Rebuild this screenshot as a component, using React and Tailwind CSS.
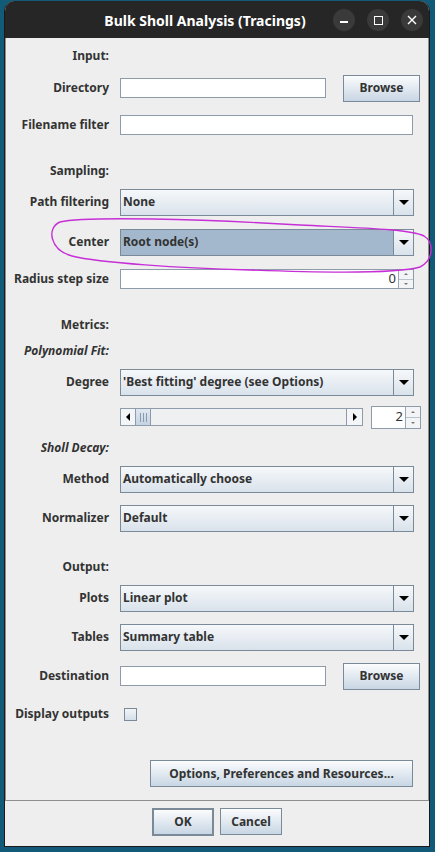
const font = { fontFamily: '"Noto Sans", "Open Sans", sans-serif' };

function Label({ children, italic }) {
  return (
    <div className={`w-[103px] shrink-0 text-right text-[12px] font-bold text-[#333333] ${italic ? 'italic' : ''}`}>
      {children}
    </div>
  );
}

function Row({ label, italic, h = 'h-[30px]', mt, children }) {
  return (
    <div className={`flex ${h} items-center gap-[11px] ${mt}`}>
      <Label italic={italic}>{label}</Label>
      <div className="flex flex-1 items-center">{children}</div>
    </div>
  );
}

function TextField({ w = 'w-[206px]' }) {
  return <div className={`h-[20px] ${w} border border-[#8d9bab] bg-white`} />;
}

function Arrow({ dir = 'down' }) {
  if (dir === 'down') return <div className="h-0 w-0 border-x-[5px] border-t-[5px] border-x-transparent border-t-black" />;
  if (dir === 'left') return <div className="h-0 w-0 border-y-[4px] border-r-[4px] border-y-transparent border-r-black" />;
  return <div className="h-0 w-0 border-y-[4px] border-l-[4px] border-y-transparent border-l-black" />;
}

function Combo({ value, selected }) {
  return (
    <div className="flex h-[27px] w-[294px] border border-[#7a8a99] bg-linear-to-b from-[#f6f8fa] to-[#d9e2eb]">
      <div className={`flex flex-1 items-center px-[2px] text-[12px] font-bold text-[#333333] ${selected ? 'bg-[#a3b8cc]' : ''}`}>
        {value}
      </div>
      <div className="flex w-[20px] items-center justify-center border-l border-[#7a8a99]">
        <Arrow />
      </div>
    </div>
  );
}

function Spinner({ value, w, h }) {
  return (
    <div className={`flex ${w} ${h} border border-[#8d9bab] bg-white`}>
      <div className="flex flex-1 items-center justify-end pr-[2px] text-[13px] text-[#333333]">{value}</div>
      <div className="flex w-[15px] flex-col border-l border-[#9aa8b6] bg-[#f2f4f6]">
        <div className="flex flex-1 items-center justify-center border-b border-[#b8c3ce]">
          <div className="h-0 w-0 border-x-[2px] border-b-[2px] border-x-transparent border-b-[#777]" />
        </div>
        <div className="flex flex-1 items-center justify-center">
          <div className="h-0 w-0 border-x-[2px] border-t-[2px] border-x-transparent border-t-[#777]" />
        </div>
      </div>
    </div>
  );
}

function Button({ children, w, className = '' }) {
  return (
    <div
      className={`flex h-[27px] ${w} items-center justify-center border border-[#7a8a99] bg-linear-to-b from-[#fbfcfd] to-[#c8d6e4] text-[12px] font-bold text-[#333333] ${className}`}
    >
      {children}
    </div>
  );
}

function Scrollbar() {
  return (
    <div className="flex h-[18px] w-[243px] border border-[#8d9bab] bg-[#eef0f2]">
      <div className="flex w-[15px] items-center justify-center border-r border-[#8d9bab] bg-[#f4f5f6]">
        <Arrow dir="left" />
      </div>
      <div className="flex w-[15px] items-center justify-center gap-[2px] border-r border-[#8d9bab] bg-linear-to-b from-[#dfe8f1] to-[#c4d3e2]">
        <div className="h-[9px] w-px bg-[#8a9aab]" />
        <div className="h-[9px] w-px bg-[#8a9aab]" />
        <div className="h-[9px] w-px bg-[#8a9aab]" />
      </div>
      <div className="flex-1" />
      <div className="flex w-[16px] items-center justify-center border-l border-[#8d9bab] bg-[#f4f5f6]">
        <Arrow dir="right" />
      </div>
    </div>
  );
}

function TitleButton({ children }) {
  return <div className="flex h-[22px] w-[22px] items-center justify-center rounded-full bg-[#3a3a3a]">{children}</div>;
}

export default function App() {
  return (
    <div className="relative h-[852px] w-[435px] overflow-hidden bg-[#115a78] pt-[1px] pl-[4px]" style={font}>
      <div className="flex h-[846px] w-[426px] flex-col overflow-hidden rounded-t-[10px] border-x border-b border-[#1a1a1a] bg-[#eeeeee]">
        {/* title bar */}
        <div className="relative flex h-[37px] shrink-0 items-center justify-center bg-[#262626]">
          <div className="-ml-[24px] mt-[1px] text-[14px] font-bold text-white">Bulk Sholl Analysis (Tracings)</div>
          <div className="absolute right-[6px] top-[8px] flex gap-[12px]">
            <TitleButton>
              <div className="mt-[4px] h-[1.5px] w-[8px] bg-white" />
            </TitleButton>
            <TitleButton>
              <div className="h-[9px] w-[9px] border-[1.5px] border-white" />
            </TitleButton>
            <TitleButton>
              <svg width="10" height="10" viewBox="0 0 10 10">
                <path d="M1 1L9 9M9 1L1 9" stroke="white" strokeWidth="1.4" />
              </svg>
            </TitleButton>
          </div>
        </div>

        {/* form panel */}
        <div className="flex flex-col border-x border-b border-[#8e8e8e] pr-[8px] pt-[8px] pb-[13px]">
          <Row label="Input:" h="h-[20px]" />
          <Row label="Directory" mt="mt-[7px]">
            <TextField />
            <Button w="w-[77px]" className="ml-auto">Browse</Button>
          </Row>
          <Row label="Filename filter" mt="mt-[7px]">
            <TextField w="w-[293px]" />
          </Row>
          <Row label="Sampling:" h="h-[20px]" mt="mt-[21px]" />
          <Row label="Path filtering" mt="mt-[6px]">
            <Combo value="None" />
          </Row>
          <Row label="Center" mt="mt-[10px]">
            <Combo value="Root node(s)" selected />
          </Row>
          <Row label="Radius step size" mt="mt-[7px]">
            <Spinner value="0" w="w-[294px]" h="h-[20px]" />
          </Row>
          <Row label="Metrics:" h="h-[20px]" mt="mt-[21px]" />
          <Row label="Polynomial Fit:" italic h="h-[20px]" mt="mt-[6px]" />
          <Row label="Degree" mt="mt-[6px]">
            <Combo value="'Best fitting' degree (see Options)" />
          </Row>
          <Row label="" mt="mt-[5px]">
            <Scrollbar />
            <div className="ml-[8px]">
              <Spinner value="2" w="w-[50px]" h="h-[23px]" />
            </div>
          </Row>
          <Row label="Sholl Decay:" italic h="h-[20px]" mt="mt-[6px]" />
          <Row label="Method" mt="mt-[6px]">
            <Combo value="Automatically choose" />
          </Row>
          <Row label="Normalizer" mt="mt-[9px]">
            <Combo value="Default" />
          </Row>
          <Row label="Output:" h="h-[20px]" mt="mt-[24px]" />
          <Row label="Plots" mt="mt-[6px]">
            <Combo value="Linear plot" />
          </Row>
          <Row label="Tables" mt="mt-[9px]">
            <Combo value="Summary table" />
          </Row>
          <Row label="Destination" mt="mt-[9px]">
            <TextField />
            <Button w="w-[77px]" className="ml-auto">Browse</Button>
          </Row>
          <Row label="Display outputs" mt="mt-[8px]">
            <div className="ml-[4px] h-[13px] w-[13px] border border-[#7a8a99] bg-linear-to-b from-[#f2f5f8] to-[#d4dee8]" />
          </Row>
          <div className="mt-[31px] flex justify-end pr-[7px]">
            <Button w="w-[263px]">Options, Preferences and Resources...</Button>
          </div>
        </div>

        {/* dialog buttons */}
        <div className="flex justify-center gap-[6px] pt-[7px]">
          <Button w="w-[62px]" className="h-[28px] border-2 border-[#6e7a86]">OK</Button>
          <Button w="w-[62px]">Cancel</Button>
        </div>
      </div>

      {/* hand-drawn circle around the Center row */}
      <svg className="pointer-events-none absolute left-0 top-0" width="435" height="852">
        <path
          d="M60 222 C85 216 200 219 300 225 C360 228 410 229 424 236 C434 242 434 260 420 267 C400 273 330 273 250 270 C180 268 100 263 72 256 C50 250 46 228 60 222"
          fill="none"
          stroke="#c62fd6"
          strokeWidth="1.4"
        />
      </svg>
    </div>
  );
}
